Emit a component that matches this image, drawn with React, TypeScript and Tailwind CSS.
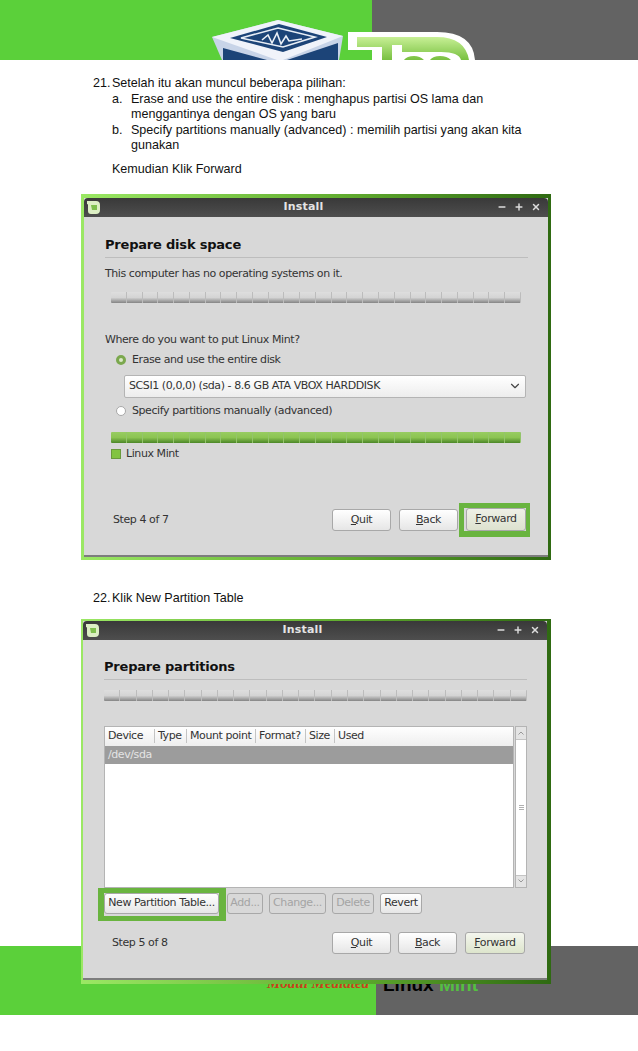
import React from 'react';
import { ChevronDown, Minus, Plus, X } from 'lucide-react';

const segments = Array.from({ length: 26 });

const SegBar = ({ green, className }: { green?: boolean; className?: string }) => (
  <div className={`flex h-[11px] overflow-hidden rounded-[1px] ${className ?? ''}`}>
    {segments.map((_, i) => (
      <div
        key={i}
        className={
          green
            ? 'flex-1 border-r border-[#93c46a] bg-gradient-to-b from-[#98cc62] via-[#8cc452] to-[#4c8728]'
            : 'flex-1 border-r border-[#bcbcbc] bg-gradient-to-b from-[#dedede] via-[#d4d4d4] to-[#858585]'
        }
      />
    ))}
  </div>
);

const GtkButton = ({ children, className, disabled }: { children: React.ReactNode; className?: string; disabled?: boolean }) => (
  <div
    className={`flex items-center justify-center whitespace-nowrap rounded-[3px] border border-[#a8a8a8] ${
      disabled ? 'bg-[#d8d8d8] text-[#a4a4a4]' : 'bg-gradient-to-b from-white to-[#e6e6e6] text-[#333333]'
    } ${className ?? ''}`}
  >
    {children}
  </div>
);

const MintIcon = () => (
  <svg width="15" height="15" viewBox="0 0 15 15">
    <path d="M1 1h9q4 0 4 4v5q0 4-4 4H5q-3 0-3-3V5q0-1-1-1z" fill="#dcefc4" />
    <path d="M5 5h6v5H6z" fill="#7fc04e" />
  </svg>
);

const TitleBar = () => (
  <div className="flex h-[19px] items-center rounded-t-[4px] bg-gradient-to-b from-[#393939] to-[#4e4e4e] pl-[2px] pr-[7px]">
    <MintIcon />
    <div className="flex-1 pl-[9px] text-center text-[11px] font-bold tracking-[0.2px] text-[#e4e4e4]">Install</div>
    <div className="flex items-center gap-[7px] text-[#dcdcdc]">
      <Minus size={10} strokeWidth={3.5} />
      <Plus size={10} strokeWidth={3.5} />
      <X size={10} strokeWidth={3.5} />
    </div>
  </div>
);

const Window = ({ className, children }: { className?: string; children: React.ReactNode }) => (
  <div className={`relative z-10 ml-[81px] w-[470px] bg-[linear-gradient(to_right,#9be864,#62ad30_55%,#2f6a12)] ${className ?? ''}`}>
    <div className="border-b-2 border-[#7d7d7d] bg-[#d8d8d8] font-['DejaVu_Sans',sans-serif] text-[11px] tracking-[-0.42px] text-[#333333]">
      <TitleBar />
      {children}
    </div>
  </div>
);

const Radio = ({ on }: { on?: boolean }) => (
  <span
    className={`h-[10px] w-[10px] rounded-full ${
      on ? 'border-[3px] border-[#7ba84e] bg-[#dbe8c8]' : 'border border-[#a8a8a8] bg-white'
    }`}
  />
);

const Underlined = ({ first, rest }: { first: string; rest: string }) => (
  <span>
    <span className="underline">{first}</span>
    {rest}
  </span>
);

const Heading = ({ children, className }: { children: React.ReactNode; className?: string }) => (
  <h2 className={`border-b border-[#bdbdbd] pb-[4px] text-[13px] font-bold leading-[16px] tracking-[-0.2px] text-[#111111] ${className ?? ''}`}>
    {children}
  </h2>
);

const columns = [
  ['Device', 'w-[49px]'],
  ['Type', 'w-[32px]'],
  ['Mount point', 'w-[69px]'],
  ['Format?', 'w-[50px]'],
  ['Size', 'w-[29px]'],
  ['Used', 'flex-1'],
];

export default function App() {
  return (
    <div className="relative h-[1051px] w-[638px] overflow-hidden bg-white font-['Liberation_Sans',sans-serif] text-[#111111]">
      {/* Header */}
      <header className="relative flex h-[60px] overflow-hidden">
        <div className="w-[372px] bg-[#5bd03a]" />
        <div className="flex-1 bg-[#636363]" />
        <svg className="absolute left-[205px] top-[15px]" width="150" height="45" viewBox="0 0 150 45">
          <path d="M73 5 138 21 134 45H17L7 22Z" fill="#c8d4e8" />
          <path d="M73 5 138 21 78 45H72L7 22Z" fill="#f0f3fa" />
          <path d="M74 9 122 22 78 37 25 23Z" fill="#1c4478" />
          <path d="M73 13 110 22 78 32 36 23Z" fill="none" stroke="#e8eef6" strokeWidth="1.6" />
          <path d="M57 25 63 20 67 28 72 18 76 29 81 21 84 26 97 24" fill="none" stroke="#e8eef6" strokeWidth="1.6" />
          <path d="M18 33 62 45H18Z" fill="#1c4478" />
          <path d="M133 28V45H82Z" fill="#1c4478" />
        </svg>
        <svg className="absolute left-[345px] top-[30px]" width="130" height="30" viewBox="0 0 130 30">
          <defs>
            <linearGradient id="mint" x1="0" y1="0" x2="0" y2="1">
              <stop offset="0" stopColor="#c8f096" />
              <stop offset="1" stopColor="#78c040" />
            </linearGradient>
          </defs>
          <path d="M3 2H92Q128 2 130 30H27V20H3Z" fill="#ffffff" />
          <path d="M12 7H92Q120 7 124 30H37V17H12Z" fill="url(#mint)" />
          <path d="M47 30V15H57V22H96Q114 22 116 30H106Q102 26 95 26Q88 26 85 30H79Q75 26 69 26Q62 26 59 30Z" fill="#ffffff" />
        </svg>
      </header>

      {/* Step 21 text */}
      <section className="pt-[16px] text-[12.55px] leading-[15.6px]">
        <div className="flex pl-[93px]">
          <span className="w-[19px]">21.</span>
          <span>Setelah itu akan muncul beberapa pilihan:</span>
        </div>
        <div className="flex pl-[112px]">
          <span className="w-[19px]">a.</span>
          <span className="w-[380px]">Erase and use the entire disk : menghapus partisi OS lama dan menggantinya dengan OS yang baru</span>
        </div>
        <div className="flex pl-[112px]">
          <span className="w-[19px]">b.</span>
          <span className="w-[400px]">Specify partitions manually (advanced) : memilih partisi yang akan kita gunakan</span>
        </div>
        <p className="mt-[8px] pl-[112px] leading-[15px]">Kemudian Klik Forward</p>
      </section>

      {/* Window 1: Prepare disk space */}
      <Window className="mt-[17px] h-[366px] px-[3px] pb-[3px] pt-[4px]">
        <div className="flex h-[338px] flex-col pl-[21px] pr-[20px]">
          <Heading className="mt-[20px]">Prepare disk space</Heading>
          <p className="mt-[9px] leading-[14px]">This computer has no operating systems on it.</p>
          <SegBar className="ml-[6px] mr-[7px] mt-[11px]" />
          <p className="mt-[30px] leading-[14px]">Where do you want to put Linux Mint?</p>
          <div className="ml-[11px] mt-[6px] flex items-center gap-[6px] leading-[14px]">
            <Radio on />
            <span>Erase and use the entire disk</span>
          </div>
          <div className="ml-[19px] mr-[2px] mt-[8px] flex h-[23px] items-center justify-between rounded-[2px] border border-[#b4b4b4] bg-gradient-to-b from-white to-[#ededed] pl-[4px] pr-[3px]">
            <span>SCSI1 (0,0,0) (sda) - 8.6 GB ATA VBOX HARDDISK</span>
            <ChevronDown size={14} strokeWidth={2} className="text-[#444444]" />
          </div>
          <div className="ml-[11px] mt-[6px] flex items-center gap-[6px] leading-[14px]">
            <Radio />
            <span>Specify partitions manually (advanced)</span>
          </div>
          <SegBar green className="ml-[6px] mr-[7px] mt-[14px]" />
          <div className="ml-[6px] mt-[4px] flex items-center gap-[5px] leading-[14px]">
            <span className="h-[10px] w-[10px] border border-[#6a9a3c] bg-[#82c441]" />
            <span>Linux Mint</span>
          </div>
          <div className="mb-[18px] mt-auto flex items-center">
            <span className="ml-[8px] flex-1">Step 4 of 7</span>
            <GtkButton className="h-[22px] w-[59px]">
              <Underlined first="Q" rest="uit" />
            </GtkButton>
            <GtkButton className="ml-[8px] h-[22px] w-[59px]">
              <Underlined first="B" rest="ack" />
            </GtkButton>
            <div className="ml-[1px] mr-[-2px] border-b-[6px] border-l-[5px] border-r-[4px] border-t-[5px] border-[#69b43f] pl-[2px]">
              <GtkButton className="h-[23px] w-[60px] !from-[#eef0e6] !to-[#dde2cf]">
                <Underlined first="F" rest="orward" />
              </GtkButton>
            </div>
          </div>
        </div>
      </Window>

      {/* Step 22 */}
      <div className="mt-[31px] flex pl-[93px] text-[12.55px] leading-[15px]">
        <span className="w-[19px]">22.</span>
        <span>Klik New Partition Table</span>
      </div>

      {/* Window 2: Prepare partitions */}
      <Window className="mt-[13px] h-[365px] pb-[4px] pl-[2px] pr-[4px] pt-[2px]">
        <div className="flex h-[338px] flex-col pl-[21px] pr-[20px]">
          <Heading className="mt-[19px]">Prepare partitions</Heading>
          <SegBar className="mt-[10px]" />
          <div className="mt-[25px] flex h-[162px] gap-[1px]">
            <div className="flex flex-1 flex-col border border-[#b4b4b4] bg-white">
              <div className="flex h-[19px] items-center whitespace-nowrap bg-gradient-to-b from-white to-[#eeeeee] leading-[14px]">
                {columns.map(([name, width]) => (
                  <span key={name} className={`${width} pl-[3px] [&:not(:first-child)]:border-l [&:not(:first-child)]:border-[#c4c4c4]`}>
                    {name}
                  </span>
                ))}
              </div>
              <div className="flex h-[18px] items-center bg-[#9c9c9c] pl-[3px] text-[#e4e4e4]">/dev/sda</div>
            </div>
            <div className="flex w-[12px] flex-col border border-[#b4b4b4] bg-white">
              <div className="flex h-[13px] items-center justify-center border-b border-[#c4c4c4] bg-[#e4e4e4] text-[#999999]">
                <svg width="6" height="4" viewBox="0 0 6 4"><path d="M0.5 3.5 3 1 5.5 3.5" fill="none" stroke="currentColor" /></svg>
              </div>
              <div className="flex flex-1 flex-col items-center justify-center gap-[1px]">
                <span className="h-[1px] w-[5px] bg-[#b0b0b0]" />
                <span className="h-[1px] w-[5px] bg-[#b0b0b0]" />
                <span className="h-[1px] w-[5px] bg-[#b0b0b0]" />
              </div>
              <div className="flex h-[12px] items-center justify-center border-t border-[#c4c4c4] bg-[#e4e4e4] text-[#999999]">
                <svg width="6" height="4" viewBox="0 0 6 4"><path d="M0.5 0.5 3 3 5.5 0.5" fill="none" stroke="currentColor" /></svg>
              </div>
            </div>
          </div>
          <div className="ml-[-6px] flex items-start">
            <div className="border-b-[5px] border-l-[6px] border-r-[7px] border-t-[5px] border-[#69b43f] pb-[2px]">
              <GtkButton className="h-[21px] w-[115px]">New Partition Table...</GtkButton>
            </div>
            <div className="ml-[1px] mt-[5px] flex gap-[6px]">
              <GtkButton disabled className="h-[21px] w-[36px]">Add...</GtkButton>
              <GtkButton disabled className="h-[21px] w-[57px]">Change...</GtkButton>
              <GtkButton disabled className="h-[21px] w-[42px]">Delete</GtkButton>
              <GtkButton className="h-[21px] w-[42px]">Revert</GtkButton>
            </div>
          </div>
          <div className="mt-[11px] flex items-center">
            <span className="ml-[8px] flex-1">Step 5 of 8</span>
            <GtkButton className="h-[22px] w-[59px]">
              <Underlined first="Q" rest="uit" />
            </GtkButton>
            <GtkButton className="ml-[7px] h-[22px] w-[59px]">
              <Underlined first="B" rest="ack" />
            </GtkButton>
            <GtkButton className="ml-[8px] mr-[2px] h-[22px] w-[60px] !from-[#f4f6ee] !to-[#dde5cc]">
              <Underlined first="F" rest="orward" />
            </GtkButton>
          </div>
        </div>
      </Window>

      {/* Footer band, sits under the second window */}
      <footer className="mt-[-38px] flex h-[69px]">
        <div className="w-[376px] bg-[#5bd03a] pl-[267px] pt-[29px] font-['Liberation_Serif',serif] text-[15px] font-bold italic leading-[17px] text-[#c8401c]">
          Modul Mediated
        </div>
        <div className="flex-1 bg-[#636363] pl-[7px] pt-[28px] text-[19px] font-bold leading-[22px] text-black">
          Linux <span className="text-[#54c040]">Mint</span>
        </div>
      </footer>
    </div>
  );
}
